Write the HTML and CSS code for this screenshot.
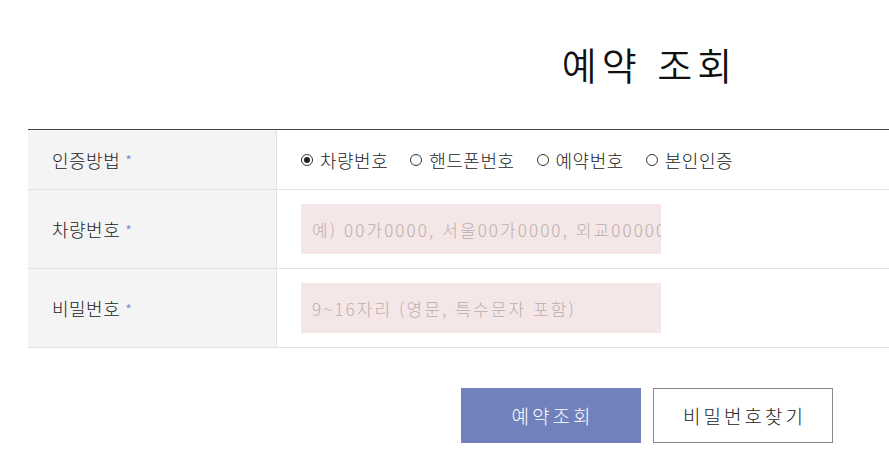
FILE: index.html
```html
<!DOCTYPE html>
<html lang="ko">
<head>
<meta charset="utf-8">
<title>예약 조회</title>
<link rel="stylesheet" href="styles.css">
</head>
<body>
<div class="page">
  <h1 class="title">예약 조회</h1>
  <div class="form">
    <div class="row row-first">
      <div class="label">인증방법<span class="req">*</span></div>
      <div class="field radios">
        <label class="radio"><span class="dot checked"></span>차량번호</label>
        <label class="radio"><span class="dot"></span>핸드폰번호</label>
        <label class="radio"><span class="dot"></span>예약번호</label>
        <label class="radio"><span class="dot"></span>본인인증</label>
      </div>
    </div>
    <div class="row">
      <div class="label">차량번호<span class="req">*</span></div>
      <div class="field"><input class="input" type="text" placeholder="예) 00가0000, 서울00가0000, 외교000000"></div>
    </div>
    <div class="row">
      <div class="label">비밀번호<span class="req">*</span></div>
      <div class="field"><input class="input" type="password" placeholder="9~16자리 (영문, 특수문자 포함)"></div>
    </div>
  </div>
  <div class="actions">
    <button class="btn btn-primary" type="button">예약조회</button>
    <button class="btn btn-outline" type="button">비밀번호찾기</button>
  </div>
</div>
</body>
</html>
```
FILE: styles.css
```css
html, body {
  margin: 0;
  padding: 0;
  background: #fff;
  overflow: hidden;
}
body {
  font-family: "Noto Sans CJK KR", "Noto Sans", sans-serif;
  color: #222;
}
.page {
  width: 1238px;
  margin-left: 28px;
}
.title {
  margin: 0;
  padding-top: 38px;
  padding-left: 5px;
  height: 129px;
  box-sizing: border-box;
  text-align: center;
  font-size: 38px;
  font-weight: 350;
  line-height: 52px;
  color: #111;
  letter-spacing: 5px;
}
.form {
  border-top: 1px solid #444;
}
.row {
  display: flex;
  height: 78px;
  border-bottom: 1px solid #e2e2e2;
}
.row-first {
  height: 59px;
}
.label {
  flex: none;
  background: #f4f4f4;
  border-right: 1px solid #e2e2e2;
  display: flex;
  align-items: center;
  padding-left: 24px;
  box-sizing: border-box;
  width: 249px;
  font-size: 18px;
  font-weight: 300;
  letter-spacing: 0.5px;
  color: #222;
}
.req {
  color: #6f80c0;
  font-size: 15px;
  margin-left: 5px;
  position: relative;
  top: 1px;
}
.field {
  flex: 1;
  display: flex;
  align-items: center;
  padding-left: 24px;
}
.radios {
  gap: 22px;
}
.radio {
  display: flex;
  align-items: center;
  font-size: 18px;
  font-weight: 300;
  letter-spacing: 0.5px;
  color: #222;
}
.dot {
  width: 12px;
  height: 12px;
  border: 1px solid #333;
  border-radius: 50%;
  box-sizing: border-box;
  margin-right: 7px;
  position: relative;
  display: inline-block;
}
.dot.checked::after {
  content: "";
  position: absolute;
  left: 2px;
  top: 2px;
  width: 6px;
  height: 6px;
  border-radius: 50%;
  background: #222;
}
.input {
  width: 360px;
  height: 50px;
  border: none;
  background: #f5e7e7;
  padding: 0 0 0 11px;
  box-sizing: border-box;
  font-family: "Noto Sans CJK KR", "Noto Sans", sans-serif;
  font-size: 17px;
  font-weight: 300;
  letter-spacing: 2.1px;
  color: #333;
  outline: none;
}
.input::placeholder {
  color: #bbaeae;
}
.actions {
  display: flex;
  justify-content: center;
  gap: 12px;
  padding-top: 40px;
}
.btn {
  width: 180px;
  height: 55px;
  font-family: "Noto Sans CJK KR", "Noto Sans", sans-serif;
  font-size: 19px;
  font-weight: 300;
  box-sizing: border-box;
  cursor: pointer;
  letter-spacing: 3px;
  padding: 0 0 0 3px;
}
.btn-primary {
  background: #7081bc;
  color: #fff;
  border: none;
}
.btn-outline {
  background: #fff;
  color: #222;
  border: 1px solid #8a8a8a;
}
```
